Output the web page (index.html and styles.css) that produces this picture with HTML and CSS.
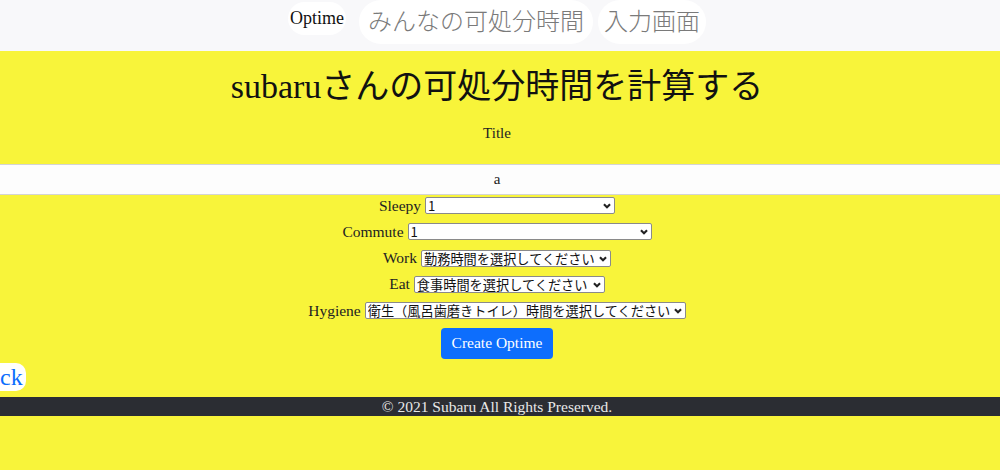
FILE: index.html
```html
<!DOCTYPE html>
<html lang="ja">
<head>
<meta charset="utf-8">
<title>Optime</title>
<link rel="stylesheet" href="styles.css">
</head>
<body>
<nav class="nav">
  <a class="pill pill-brand" href="#">Optime</a>
  <a class="pill pill-link pill-first" href="#">みんなの可処分時間</a>
  <a class="pill pill-link" href="#">入力画面</a>
</nav>
<main class="main">
  <section class="hero">
    <h1 class="hero-title">subaruさんの可処分時間を計算する</h1>
    <p class="hero-sub">Title</p>
  </section>
  <div class="titlebar"><span class="titlebar-text">a</span></div>
  <form class="form">
    <div class="row"><label class="label">Sleepy</label><span class="selwrap sel-sleepy"><select class="sel"><option>1</option></select><svg class="chev" viewBox="0 0 10 7" width="8" height="6"><path d="M1.2 1.2 L5 5 L8.8 1.2" fill="none" stroke="#222" stroke-width="2.6"/></svg></span></div>
    <div class="row"><label class="label">Commute</label><span class="selwrap sel-commute"><select class="sel"><option>1</option></select><svg class="chev" viewBox="0 0 10 7" width="8" height="6"><path d="M1.2 1.2 L5 5 L8.8 1.2" fill="none" stroke="#222" stroke-width="2.6"/></svg></span></div>
    <div class="row"><label class="label">Work</label><span class="selwrap sel-work"><select class="sel"><option>勤務時間を選択してください</option></select><svg class="chev" viewBox="0 0 10 7" width="8" height="6"><path d="M1.2 1.2 L5 5 L8.8 1.2" fill="none" stroke="#222" stroke-width="2.6"/></svg></span></div>
    <div class="row"><label class="label">Eat</label><span class="selwrap sel-eat"><select class="sel"><option>食事時間を選択してください</option></select><svg class="chev" viewBox="0 0 10 7" width="8" height="6"><path d="M1.2 1.2 L5 5 L8.8 1.2" fill="none" stroke="#222" stroke-width="2.6"/></svg></span></div>
    <div class="row"><label class="label">Hygiene</label><span class="selwrap sel-hygiene"><select class="sel"><option>衛生（風呂歯磨きトイレ）時間を選択してください</option></select><svg class="chev" viewBox="0 0 10 7" width="8" height="6"><path d="M1.2 1.2 L5 5 L8.8 1.2" fill="none" stroke="#222" stroke-width="2.6"/></svg></span></div>
    <div class="row-btn"><button class="btn" type="button">Create Optime</button></div>
  </form>
  <div class="back-wrap"><a class="back" href="#">ck</a></div>
  <footer class="footer">© 2021 Subaru All Rights Preserved.</footer>
</main>
</body>
</html>
```
FILE: styles.css
```css
* { box-sizing: border-box; }
html, body { margin: 0; padding: 0; }
body {
  font-family: "Liberation Serif", "Noto Sans CJK JP", serif;
  background: #f8f43a;
  color: #222;
  height: 470px;
  overflow: hidden;
}
.nav {
  background: #f8f8fa;
  height: 51px;
  display: flex;
  justify-content: center;
  align-items: flex-start;
  padding-right: 6px;
}
.pill {
  background: #ffffff;
  text-decoration: none;
  border-radius: 22px;
  display: block;
}
.pill-brand {
  color: #111;
  font-size: 18px;
  line-height: 33px;
  height: 33px;
  padding: 0 2px;
  margin-top: 2px;
  margin-right: 13px;
  border-radius: 17px;
}
.pill-link {
  color: #7a7a7a;
  font-family: "Noto Sans CJK JP", sans-serif;
  font-weight: 300;
  font-size: 24px;
  line-height: 40px;
  height: 44px;
  padding: 0 6px;
}
.pill-first { margin-right: 5px; padding: 0 9px; }
.main { display: flex; flex-direction: column; }
.hero {
  padding: 16px 6px 0 0;
  text-align: center;
}
.hero-title {
  margin: 0;
  font-size: 34px;
  font-weight: normal;
  line-height: 40px;
  font-family: "Liberation Serif", "Noto Sans CJK JP", serif;
  color: #111;
}
.hero-sub {
  margin: 17px 0 0;
  font-size: 15px;
  line-height: 18px;
}
.titlebar {
  margin-top: 22px;
  height: 31px;
  background: #fdfdfd;
  border-top: 1px solid #d4d4d4;
  border-bottom: 1px solid #d4d4d4;
  display: flex;
  align-items: center;
  justify-content: center;
  padding-right: 6px;
  font-size: 15px;
}
.form {
  display: flex;
  flex-direction: column;
  align-items: center;
  padding: 2px 6px 0 0;
}
.row {
  height: 17px;
  margin-bottom: 9.25px;
  display: flex;
  align-items: center;
  justify-content: center;
}
.label { font-size: 15.5px; margin-right: 4px; color: #222; }
.selwrap {
  position: relative;
  display: block;
  height: 17px;
}
.sel {
  -webkit-appearance: none;
  appearance: none;
  width: 100%;
  height: 17px;
  font-family: "Noto Sans CJK JP", sans-serif;
  font-size: 13.2px;
  line-height: 15px;
  padding: 0 14px 0 2px;
  border: 1px solid #8a8a8a;
  border-radius: 2px;
  background: #fff;
  color: #111;
  overflow: hidden;
}
.chev {
  position: absolute;
  right: 4px;
  top: 6px;
  pointer-events: none;
}
.sel-sleepy { width: 190px; }
.sel-commute { width: 244px; }
.sel-work { width: 190px; }
.sel-eat { width: 191px; }
.sel-hygiene { width: 321px; }
.row-btn { margin-top: -0.5px; }
.btn {
  width: 112px;
  height: 31px;
  background: #0d6efd;
  color: #fff;
  border: none;
  border-radius: 4px;
  font-family: "Liberation Serif", serif;
  font-size: 15.5px;
}
.back-wrap { height: 38px; padding-top: 4px; }
.back {
  display: inline-block;
  background: #fff;
  color: #0d6efd;
  text-decoration: none;
  font-size: 24px;
  line-height: 28px;
  padding: 0 3px 0 0;
  border-radius: 0 10px 10px 0;
}
.footer {
  height: 19px;
  background: #2b2d33;
  color: #e8e8e8;
  font-size: 15.5px;
  line-height: 19px;
  text-align: center;
  padding-right: 6px;
}
```
